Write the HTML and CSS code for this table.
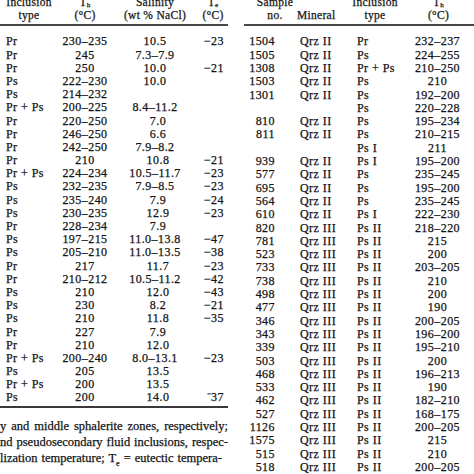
FILE: index.html
```html
<!DOCTYPE html>
<html lang="en">
<head>
<meta charset="utf-8">
<title>Fluid inclusion data</title>
<link rel="stylesheet" href="styles.css">
</head>
<body>
<div class="page">
  <section class="left">
    <div class="thead cols-l">
      <div class="h"><span>Inclusion</span><span>type</span></div>
      <div class="h"><span>T<sub>h</sub></span><span>(°C)</span></div>
      <div class="h"><span>Salinity</span><span>(wt % NaCl)</span></div>
      <div class="h"><span>T<sub>e</sub></span><span>(°C)</span></div>
    </div>
    <div class="tbody cols-l bottom">
      <span class="l">Pr</span><span class="c">230–235</span><span class="c">10.5</span><span class="r">−23</span>
      <span class="l">Pr</span><span class="c">245</span><span class="c">7.3–7.9</span><span class="r"></span>
      <span class="l">Pr</span><span class="c">250</span><span class="c">10.0</span><span class="r">−21</span>
      <span class="l">Ps</span><span class="c">222–230</span><span class="c">10.0</span><span class="r"></span>
      <span class="l">Ps</span><span class="c">214–232</span><span class="c"></span><span class="r"></span>
      <span class="l">Pr + Ps</span><span class="c">200–225</span><span class="c">8.4–11.2</span><span class="r"></span>
      <span class="l">Pr</span><span class="c">220–250</span><span class="c s">7.0</span><span class="r"></span>
      <span class="l">Pr</span><span class="c">246–250</span><span class="c s">6.6</span><span class="r"></span>
      <span class="l">Pr</span><span class="c">242–250</span><span class="c">7.9–8.2</span><span class="r"></span>
      <span class="l">Pr</span><span class="c">210</span><span class="c s">10.8</span><span class="r">−21</span>
      <span class="l">Pr + Ps</span><span class="c">224–234</span><span class="c">10.5–11.7</span><span class="r">−23</span>
      <span class="l">Ps</span><span class="c">232–235</span><span class="c">7.9–8.5</span><span class="r">−23</span>
      <span class="l">Ps</span><span class="c">235–240</span><span class="c s">7.9</span><span class="r">−24</span>
      <span class="l">Ps</span><span class="c">230–235</span><span class="c s">12.9</span><span class="r">−23</span>
      <span class="l">Pr</span><span class="c">228–234</span><span class="c s">7.9</span><span class="r"></span>
      <span class="l">Ps</span><span class="c">197–215</span><span class="c">11.0–13.8</span><span class="r">−47</span>
      <span class="l">Ps</span><span class="c">205–210</span><span class="c">11.0–13.5</span><span class="r">−38</span>
      <span class="l">Pr</span><span class="c">217</span><span class="c s">11.7</span><span class="r">−23</span>
      <span class="l">Pr</span><span class="c">210–212</span><span class="c">10.5–11.2</span><span class="r">−42</span>
      <span class="l">Ps</span><span class="c">210</span><span class="c s">12.0</span><span class="r">−43</span>
      <span class="l">Ps</span><span class="c">230</span><span class="c s">8.2</span><span class="r">−21</span>
      <span class="l">Ps</span><span class="c">210</span><span class="c s">11.8</span><span class="r">−35</span>
      <span class="l">Pr</span><span class="c">227</span><span class="c s">7.9</span><span class="r"></span>
      <span class="l">Pr</span><span class="c">210</span><span class="c s">12.0</span><span class="r"></span>
      <span class="l">Pr + Ps</span><span class="c">200–240</span><span class="c">8.0–13.1</span><span class="r">−23</span>
      <span class="l">Ps</span><span class="c">205</span><span class="c s">13.5</span><span class="r"></span>
      <span class="l">Pr + Ps</span><span class="c">200</span><span class="c s">13.5</span><span class="r"></span>
      <span class="l">Ps</span><span class="c">200</span><span class="c s">14.0</span><span class="r">⁻37</span>
    </div>
    <p class="note">
      <span>y and middle sphalerite zones, respectively;</span>
      <span>nd pseudosecondary fluid inclusions, respec-</span>
      <span class="last">lization temperature; T<sub>e</sub> = eutectic tempera-</span>
    </p>
  </section>

  <section class="right">
    <div class="thead cols-r">
      <div class="h hs"><span>Sample</span><span>no.</span></div>
      <div class="h hm"><span>Mineral</span></div>
      <div class="h hi"><span>Inclusion</span><span>type</span></div>
      <div class="h ht"><span>T<sub>h</sub></span><span>(°C)</span></div>
    </div>
    <div class="tbody cols-r wide">
      <span class="n">1504</span><span class="m">Qrz II</span><span class="t">Pr</span><span class="th">232–237</span>
      <span class="n">1505</span><span class="m">Qrz II</span><span class="t">Ps</span><span class="th">224–255</span>
      <span class="n">1308</span><span class="m">Qrz II</span><span class="t">Pr + Ps</span><span class="th">210–250</span>
      <span class="n">1503</span><span class="m">Qrz II</span><span class="t">Ps</span><span class="th">210</span>
      <span class="n">1301</span><span class="m">Qrz II</span><span class="t">Ps</span><span class="th">192–200</span>
      <span class="n"></span><span class="m"></span><span class="t">Ps</span><span class="th">220–228</span>
      <span class="n">810</span><span class="m">Qrz II</span><span class="t">Ps</span><span class="th">195–234</span>
      <span class="n">811</span><span class="m">Qrz II</span><span class="t">Ps</span><span class="th">210–215</span>
      <span class="n"></span><span class="m"></span><span class="t">Ps I</span><span class="th">211</span>
      <span class="n">939</span><span class="m">Qrz II</span><span class="t">Ps I</span><span class="th">195–200</span>
      <span class="n">577</span><span class="m">Qrz II</span><span class="t">Ps</span><span class="th">235–245</span>
      <span class="n">695</span><span class="m">Qrz II</span><span class="t">Ps</span><span class="th">195–200</span>
      <span class="n">564</span><span class="m">Qrz II</span><span class="t">Ps</span><span class="th">235–245</span>
      <span class="n">610</span><span class="m">Qrz II</span><span class="t">Ps I</span><span class="th">222–230</span>
      <span class="n">820</span><span class="m">Qrz III</span><span class="t">Ps II</span><span class="th">218–220</span>
      <span class="n">781</span><span class="m">Qrz III</span><span class="t">Ps II</span><span class="th">215</span>
      <span class="n">523</span><span class="m">Qrz III</span><span class="t">Ps II</span><span class="th">200</span>
      <span class="n">733</span><span class="m">Qrz III</span><span class="t">Ps II</span><span class="th">203–205</span>
      <span class="n">738</span><span class="m">Qrz III</span><span class="t">Ps II</span><span class="th">210</span>
      <span class="n">498</span><span class="m">Qrz III</span><span class="t">Ps II</span><span class="th">200</span>
      <span class="n">477</span><span class="m">Qrz III</span><span class="t">Ps II</span><span class="th">190</span>
      <span class="n">346</span><span class="m">Qrz III</span><span class="t">Ps II</span><span class="th">200–205</span>
      <span class="n">343</span><span class="m">Qrz III</span><span class="t">Ps II</span><span class="th">196–200</span>
      <span class="n">339</span><span class="m">Qrz III</span><span class="t">Ps II</span><span class="th">195–210</span>
      <span class="n">503</span><span class="m">Qrz III</span><span class="t">Ps II</span><span class="th">200</span>
      <span class="n">468</span><span class="m">Qrz III</span><span class="t">Ps II</span><span class="th">196–213</span>
      <span class="n">533</span><span class="m">Qrz III</span><span class="t">Ps II</span><span class="th">190</span>
      <span class="n">462</span><span class="m">Qrz III</span><span class="t">Ps II</span><span class="th">182–210</span>
      <span class="n">527</span><span class="m">Qrz III</span><span class="t">Ps II</span><span class="th">168–175</span>
      <span class="n">1126</span><span class="m">Qrz III</span><span class="t">Ps II</span><span class="th">200–205</span>
      <span class="n">1575</span><span class="m">Qrz III</span><span class="t">Ps II</span><span class="th">215</span>
      <span class="n">515</span><span class="m">Qrz III</span><span class="t">Ps II</span><span class="th">210</span>
      <span class="n">518</span><span class="m">Qrz III</span><span class="t">Ps II</span><span class="th">200–205</span>
    </div>
  </section>
</div>
</body>
</html>
```

FILE: styles.css
```css
html, body {
  margin: 0;
  padding: 0;
  background: #ffffff;
}

body {
  width: 474px;
  height: 474px;
  overflow: hidden;
  font-family: "Liberation Serif", "Times New Roman", serif;
  color: #141414;
  -webkit-text-stroke: 0.25px #141414;
}

.page {
  display: flex;
  gap: 16px;
  margin-top: -4px;
}

.left {
  flex: none;
  width: 228px;
}

.right {
  flex: none;
  width: 230px;
}

.cols-l {
  display: grid;
  grid-template-columns: 58px 54px 86px 30px;
}

.cols-r {
  display: grid;
  grid-template-columns: 52px 54px 55px 69px;
}

.thead {
  font-size: 11.5px;
  line-height: 13px;
  letter-spacing: 0.3px;
  padding-bottom: 2px;
  border-bottom: 2px solid #484848;
}

.h {
  display: flex;
  flex-direction: column;
  align-items: center;
  justify-content: flex-end;
  white-space: nowrap;
}

.h sub {
  font-size: 7px;
  line-height: 0;
  vertical-align: -1px;
}

.hs { padding-left: 10px; }
.hm { align-items: flex-start; padding-left: 1px; }
.hi { padding-right: 5px; }
.ht { padding-right: 2px; }

.tbody {
  font-size: 12px;
  letter-spacing: 0.45px;
  line-height: 13.2px;
  grid-auto-rows: 13.2px;
  padding-top: 9.4px;
  white-space: nowrap;
}

.tbody.wide {
  line-height: 13.3px;
  grid-auto-rows: 13.3px;
}

.tbody.bottom {
  padding-bottom: 1px;
  border-bottom: 2px solid #3a3a3a;
}

.l { text-align: left; padding-left: 6px; }
.c { text-align: center; }
.c.s { padding-left: 6px; }
.r { text-align: right; padding-right: 4px; }

.n { text-align: right; padding-right: 21px; }
.m { text-align: left; padding-left: 4px; }
.t { text-align: left; padding-left: 7px; }
.th { text-align: center; padding-right: 4px; }

.note {
  margin: 10px 0 0;
  font-size: 12.5px;
  line-height: 16px;
}

.note span {
  display: block;
  white-space: nowrap;
  text-align: justify;
  text-align-last: justify;
}

.note .last {
  padding-right: 6px;
}

.note sub {
  font-size: 8px;
  line-height: 0;
}
```
